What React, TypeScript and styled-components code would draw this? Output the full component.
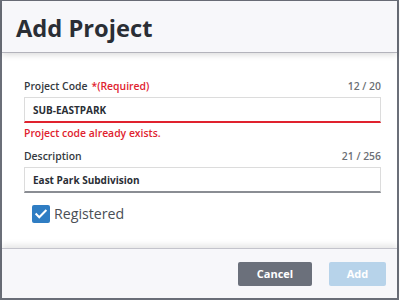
import styled, { createGlobalStyle } from "styled-components";

const Global = createGlobalStyle`
  html, body {
    margin: 0;
    padding: 0;
    background: #ffffff;
  }
  body {
    font-family: "Open Sans", "Liberation Sans", sans-serif;
  }
`;

const Dialog = styled.div`
  box-sizing: border-box;
  width: 399px;
  height: 300px;
  border: 2px solid #6b6f79;
  border-top-width: 1px;
  display: flex;
  flex-direction: column;
  background: #ffffff;
`;

const Header = styled.header`
  height: 52px;
  flex: none;
  display: flex;
  align-items: center;
  padding: 3px 14px 0;
  box-sizing: border-box;
  background: #f7f7fa;
  border-bottom: 1px solid #b3b3bb;
  box-shadow: 0 2px 6px rgba(0, 0, 0, 0.14);
  position: relative;
  z-index: 1;
`;

const Title = styled.h1`
  margin: 0;
  font-size: 23.7px;
  font-weight: 700;
  color: #2a2e35;
`;

const Body = styled.div`
  flex: 1;
  padding: 26px 16px 0 22px;
  display: flex;
  flex-direction: column;
`;

const Field = styled.div`
  display: flex;
  flex-direction: column;
  margin-bottom: 9px;
`;

const LabelRow = styled.div`
  display: flex;
  justify-content: space-between;
  align-items: baseline;
  height: 15px;
  margin-bottom: 3px;
`;

const Label = styled.label`
  font-size: 10.4px;
  font-weight: 600;
  color: #343a40;
`;

const Required = styled.span`
  color: #e0222e;
  margin-left: 4px;
`;

const Counter = styled.span`
  font-size: 10.4px;
  font-weight: 600;
  color: #6c6f75;
`;

const Input = styled.div<{ $error?: boolean }>`
  box-sizing: border-box;
  height: 26px;
  border: 1px solid #dcdcdc;
  border-bottom: 2px solid ${(p) => (p.$error ? "#e0222e" : "#8a8d93")};
  display: flex;
  align-items: center;
  padding: 0 8px;
  font-size: 10px;
  font-weight: 700;
  color: #2a2e35;
  background: #ffffff;
`;

const ErrorText = styled.div`
  margin-top: 3px;
  font-size: 10.4px;
  font-weight: 600;
  color: #e0222e;
`;

const CheckRow = styled.label`
  display: flex;
  align-items: center;
  gap: 4px;
  margin-left: 8px;
  margin-top: 2px;
  font-size: 14.2px;
  color: #4a4e55;
`;

const Box = styled.span`
  width: 18px;
  height: 18px;
  border-radius: 2px;
  background: #2f7dc3;
  display: flex;
  align-items: center;
  justify-content: center;
`;

const Footer = styled.footer`
  height: 49px;
  flex: none;
  display: flex;
  align-items: center;
  justify-content: flex-end;
  gap: 17px;
  padding: 0 11px 0 0;
  background: #f7f7fa;
  border-top: 1px solid #c4c4cc;
  box-shadow: 0 -3px 6px rgba(0, 0, 0, 0.1);
`;

const Button = styled.button<{ $primary?: boolean }>`
  height: 24px;
  width: ${(p) => (p.$primary ? "57px" : "74px")};
  border: none;
  border-radius: 2px;
  font-family: inherit;
  font-size: 11px;
  font-weight: 700;
  color: #ffffff;
  background: ${(p) => (p.$primary ? "#b7d3ea" : "#6b707b")};
`;

export default function App() {
  return (
    <>
      <Global />
      <Dialog>
        <Header>
          <Title>Add Project</Title>
        </Header>
        <Body>
          <Field>
            <LabelRow>
              <Label>
                Project Code<Required>*(Required)</Required>
              </Label>
              <Counter>12 / 20</Counter>
            </LabelRow>
            <Input $error>SUB-EASTPARK</Input>
            <ErrorText>Project code already exists.</ErrorText>
          </Field>
          <Field>
            <LabelRow>
              <Label>Description</Label>
              <Counter>21 / 256</Counter>
            </LabelRow>
            <Input>East Park Subdivision</Input>
          </Field>
          <CheckRow>
            <Box>
              <svg width="14" height="14" viewBox="0 0 24 24" fill="none" stroke="#fff" strokeWidth="3.5" strokeLinecap="square">
                <path d="M4 12.5l5 5L20 6.5" />
              </svg>
            </Box>
            Registered
          </CheckRow>
        </Body>
        <Footer>
          <Button>Cancel</Button>
          <Button $primary>Add</Button>
        </Footer>
      </Dialog>
    </>
  );
}
